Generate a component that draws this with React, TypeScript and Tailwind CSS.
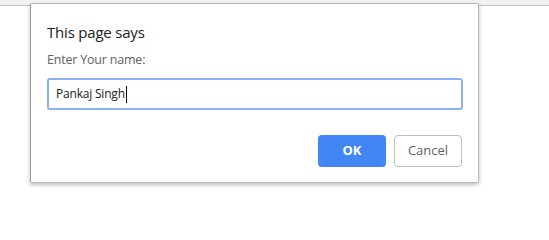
export default function App() {
  return (
    <div className="relative h-[233px] w-[549px] overflow-hidden bg-white font-['Open_Sans',sans-serif]">
      <div className="h-[6px] border-b border-[#c4c4c4] bg-[#f2f2f2]" />
      <div className="absolute left-[30px] top-[3px] h-[180px] w-[449px] rounded-[2px] border border-[#b5b5b5] border-l-[#9a9a9a] bg-white shadow-[0_2px_4px_rgba(0,0,0,0.25)]">
        <div className="px-4 pt-[18px]">
          <div className="text-[15px] leading-5 tracking-[-0.2px] text-[#202124]">This page says</div>
          <div className="mt-[10px] text-[12.5px] leading-4 tracking-[-0.2px] text-[#5f5f5f]">Enter Your name:</div>
          <div className="mt-[10px] flex h-[32px] w-[416px] items-center rounded-[3px] border-2 border-[#8cb0f3] px-[7px] text-[12px] tracking-[-0.2px] text-[#202124]">
            Pankaj Singh<span className="ml-[1px] inline-block h-[17px] w-px bg-black" />
          </div>
          <div className="mt-[25px] flex justify-end gap-2">
            <button className="h-[32px] w-[68px] rounded-[4px] bg-[#4285f4] text-[13px] font-bold text-white">OK</button>
            <button className="h-[32px] w-[68px] rounded-[4px] border border-[#bdbdbd] bg-white text-[13px] text-[#5f6368]">Cancel</button>
          </div>
        </div>
      </div>
    </div>
  )
}
